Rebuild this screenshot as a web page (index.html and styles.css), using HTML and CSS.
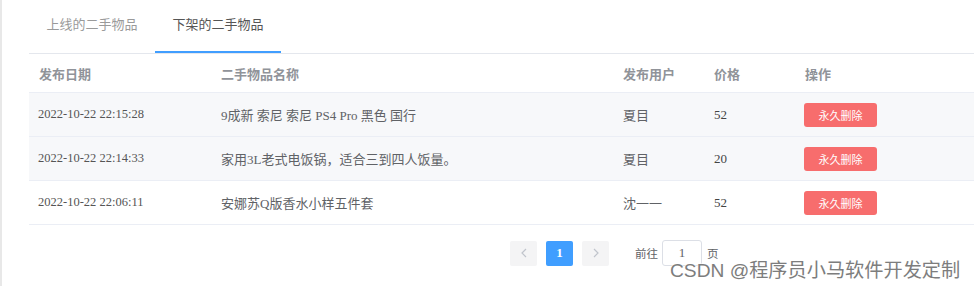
FILE: index.html
```html
<!DOCTYPE html>
<html lang="zh">
<head>
<meta charset="utf-8">
<link rel="stylesheet" href="styles.css">
</head>
<body>
<div class="page">
  <div class="main">
    <div class="tabs">
      <div class="tab">上线的二手物品</div>
      <div class="tab active">下架的二手物品</div>
    </div>
    <table class="grid">
      <colgroup>
        <col class="c-date"><col class="c-name"><col class="c-user"><col class="c-price"><col>
      </colgroup>
      <thead>
        <tr><th>发布日期</th><th>二手物品名称</th><th>发布用户</th><th>价格</th><th>操作</th></tr>
      </thead>
      <tbody>
        <tr class="shade">
          <td class="date">2022-10-22 22:15:28</td>
          <td>9成新 索尼 索尼 PS4 Pro 黑色 国行</td>
          <td>夏目</td>
          <td class="num">52</td>
          <td><button class="del">永久删除</button></td>
        </tr>
        <tr class="shade">
          <td class="date">2022-10-22 22:14:33</td>
          <td>家用3L老式电饭锅，适合三到四人饭量。</td>
          <td>夏目</td>
          <td class="num">20</td>
          <td><button class="del">永久删除</button></td>
        </tr>
        <tr>
          <td class="date">2022-10-22 22:06:11</td>
          <td>安娜苏Q版香水小样五件套</td>
          <td>沈一一</td>
          <td class="num">52</td>
          <td><button class="del">永久删除</button></td>
        </tr>
      </tbody>
    </table>
    <div class="pager">
      <button class="pbtn arrow" aria-label="上一页">
        <svg width="8" height="10" viewBox="0 0 8 10"><path d="M6 1 L2 5 L6 9" fill="none" stroke="#c0c4cc" stroke-width="1.2"/></svg>
      </button>
      <button class="pbtn current">1</button>
      <button class="pbtn arrow" aria-label="下一页">
        <svg width="8" height="10" viewBox="0 0 8 10"><path d="M2 1 L6 5 L2 9" fill="none" stroke="#c0c4cc" stroke-width="1.2"/></svg>
      </button>
      <span class="jump">前往</span>
      <span class="pinput">1</span>
      <span class="unit">页</span>
    </div>
  </div>
  <div class="watermark">CSDN @程序员小马软件开发定制</div>
</div>
</body>
</html>
```

FILE: styles.css
```css
html, body {
  margin: 0;
  padding: 0;
  background: #fff;
}
.page {
  position: relative;
  width: 974px;
  height: 286px;
  overflow: hidden;
  border-left: 2px solid #e8e8e8;
  box-sizing: border-box;
}
.main {
  padding-left: 27px;
}
.tabs {
  display: flex;
  height: 53px;
  border-bottom: 1px solid #e4e7ed;
  font-family: "Liberation Serif", "Noto Sans CJK SC", serif;
}
.tab {
  width: 126px;
  box-sizing: border-box;
  height: 53px;
  padding-bottom: 1px;
  line-height: 50px;
  text-align: center;
  font-size: 13px;
  color: #9a9a9a;
  border-bottom: 2px solid transparent;
}
.tab.active {
  color: #555;
  border-bottom-color: #409eff;
}
.grid {
  width: 945px;
  border-collapse: collapse;
  table-layout: fixed;
  font-family: "Liberation Serif", "Noto Sans CJK SC", serif;
  font-size: 13px;
  color: #606266;
}
.c-date { width: 182px; }
.c-name { width: 402px; }
.c-user { width: 91px; }
.c-price { width: 91px; }
.grid th {
  height: 38px;
  padding: 0 0 0 10px;
  text-align: left;
  font-weight: bold;
  color: #909399;
  border-bottom: 1px solid #ebeef5;
}
.grid td {
  height: 44px;
  box-sizing: border-box;
  padding: 0 0 0 10px;
  border-bottom: 1px solid #ebeef5;
  white-space: nowrap;
}
.grid td.date {
  font-size: 12.5px;
  padding-left: 9px;
  color: #555;
}
.grid td.num {
  color: #444;
}
.grid tr.shade td {
  background: #f7f8fa;
}
.del {
  width: 73px;
  height: 24px;
  margin-left: -1px;
  border: none;
  border-radius: 3px;
  background: #f76d6d;
  color: #fff;
  font-family: "Noto Sans CJK SC", sans-serif;
  font-size: 11px;
  padding: 0;
  display: block;
}
.pager {
  display: flex;
  align-items: center;
  padding-left: 481px;
  margin-top: 15px;
  font-family: "Noto Sans CJK SC", sans-serif;
  font-size: 11.5px;
  color: #606266;
}
.pbtn {
  width: 27px;
  height: 25px;
  margin-right: 9px;
  border: none;
  border-radius: 2px;
  background: #f4f4f5;
  padding: 0;
  display: flex;
  align-items: center;
  justify-content: center;
}
.pbtn.current {
  background: #409eff;
  color: #fff;
  font-family: "Liberation Serif", serif;
  font-weight: bold;
  font-size: 13px;
}
.jump {
  margin-left: 17px;
}
.pinput {
  width: 40px;
  height: 26px;
  box-sizing: border-box;
  margin-left: 4px;
  border: 1px solid #dcdfe6;
  border-radius: 3px;
  text-align: center;
  line-height: 24px;
  font-family: "Liberation Serif", serif;
  font-size: 13px;
}
.unit {
  margin-left: 5px;
}
.watermark {
  position: absolute;
  left: 668px;
  top: 255px;
  font-family: "Liberation Sans", "Noto Sans CJK SC", sans-serif;
  font-size: 19.2px;
  color: #7d7d7d;
  white-space: nowrap;
  text-shadow: 0 0 2px #fff, 0 0 2px #fff;
}
```
